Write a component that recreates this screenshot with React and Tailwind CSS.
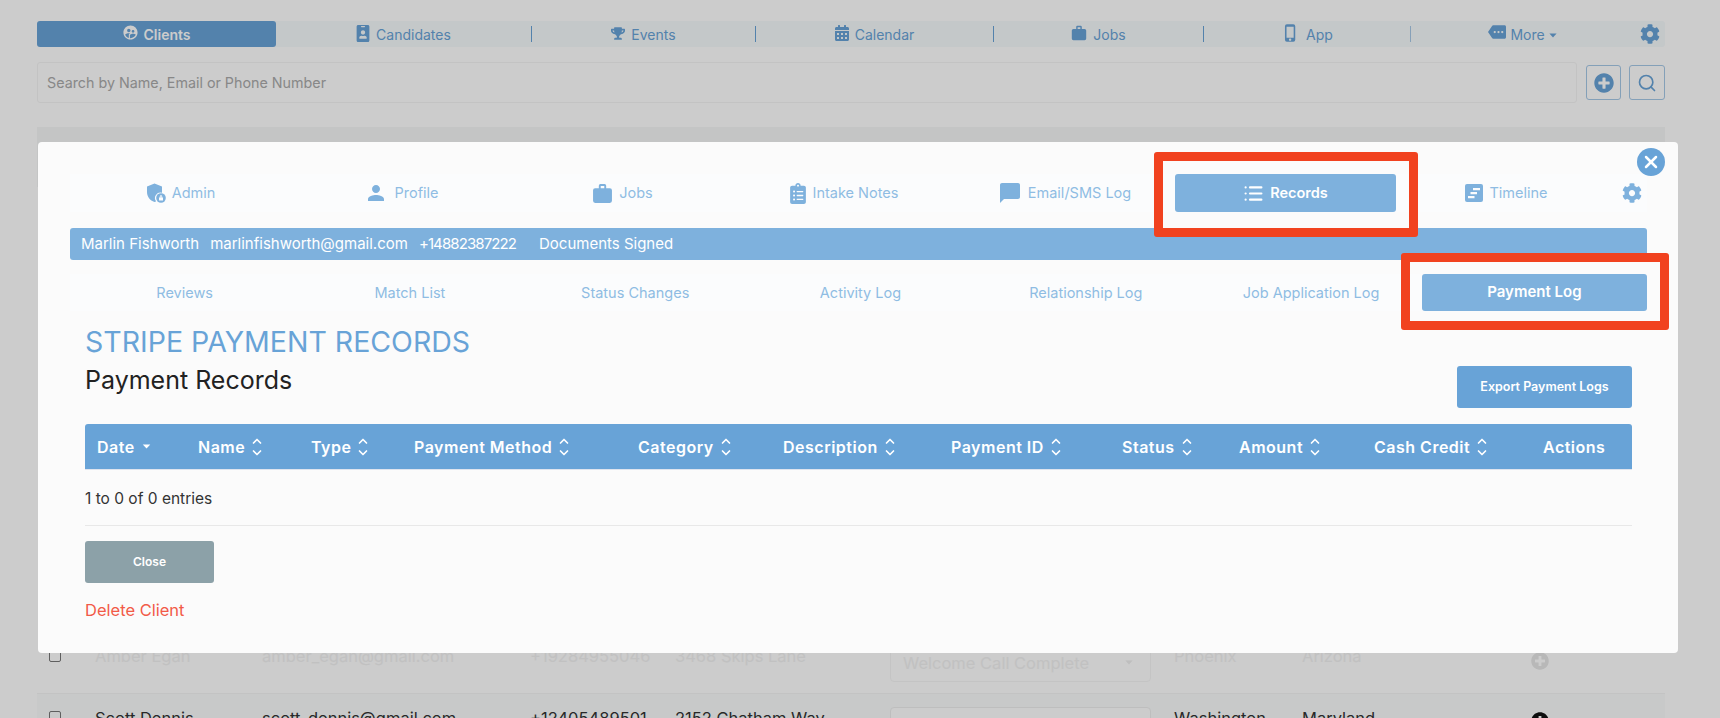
import React from 'react';
import { FaCalendarAlt, FaClipboardList, FaCog, FaIdBadge, FaPlusCircle, FaTrophy } from 'react-icons/fa';
import { MdChatBubble, MdMore, MdPerson, MdPhoneIphone, MdSupervisedUserCircle } from 'react-icons/md';
import { List, Search, X } from 'lucide-react';

const BagIcon = ({ className }) => (
    <svg viewBox="0 0 20 20" className={className} fill="currentColor">
        <path fillRule="evenodd" d="M6.500 5V2.500A1.500 1.500 0 0 1 8 1h4a1.500 1.500 0 0 1 1.500 1.500V5H17a2 2 0 0 1 2 2v10a2 2 0 0 1-2 2H3a2 2 0 0 1-2-2V7a2 2 0 0 1 2-2zM8.300 5h3.400V2.800H8.300z" />
    </svg>
);

const AdminIcon = ({ className }) => (
    <svg viewBox="0 0 20 20" className={className} fill="currentColor">
        <path d="M8.500 0.500L1 3.500v5.500c0 4.600 3 8.600 7.500 10c.6-.2 1.100-.4 1.600-.7a5.500 5.500 0 0 1 5.900-8.600V3.500z" />
        <circle cx="15" cy="15" r="4.800" />
        <path fill="#fbfcfd" d="M13 14.500h4v3h-4zM13.800 14.500v-1a1.200 1.200 0 0 1 2.400 0v1h-.8v-1a.4.4 0 0 0-.8 0v1z" />
    </svg>
);

const TimelineIcon = ({ className }) => (
    <svg viewBox="0 0 18 18" className={className}>
        <rect width="18" height="18" rx="2" fill="currentColor" />
        <path d="M8 4h7v2.200H8zM5.500 8h6.500v2.200H5.500zM3 12h6.500v2.200H3z" fill="#fbfcfd" />
    </svg>
);

const RecordsIcon = ({ className }) => <List className={className} strokeWidth={2.5} />;

const SortIcon = () => (
    <svg viewBox="0 0 10 18" className="w-[10px] h-[18px]" fill="none" stroke="currentColor" strokeWidth="1.700" strokeLinecap="round" strokeLinejoin="round">
        <path d="M1.500 5L5 1.500L8.500 5M1.500 13L5 16.500L8.500 13" />
    </svg>
);

const Caret = ({ className }) => (
    <svg viewBox="0 0 10 6" className={className} fill="currentColor">
        <path d="M0.500 0.500h9L5 5.500z" />
    </svg>
);

const mainNav = [
    { label: 'Candidates', Icon: FaIdBadge, iconClass: 'w-[14px] h-[17px]' },
    { label: 'Events', Icon: FaTrophy, iconClass: 'w-[14px] h-[15px]', line: true },
    { label: 'Calendar', Icon: FaCalendarAlt, iconClass: 'w-[14px] h-[16px]', line: true },
    { label: 'Jobs', Icon: BagIcon, iconClass: 'w-[16px] h-[16px]', line: true },
    { label: 'App', Icon: MdPhoneIphone, iconClass: 'w-[19px] h-[20px]', line: true },
];

const modalTabs = [
    { label: 'Admin', Icon: AdminIcon, iconClass: 'w-[20px] h-[20px]' },
    { label: 'Profile', Icon: MdPerson, iconClass: 'w-[24px] h-[24px]' },
    { label: 'Jobs', Icon: BagIcon, iconClass: 'w-[21px] h-[21px]' },
    { label: 'Intake Notes', Icon: FaClipboardList, iconClass: 'w-[18px] h-[21px]' },
    { label: 'Email/SMS Log', Icon: MdChatBubble, iconClass: 'w-[24px] h-[24px]' },
    { label: 'Records', Icon: RecordsIcon, iconClass: 'w-[21px] h-[21px]', active: true },
    { label: 'Timeline', Icon: TimelineIcon, iconClass: 'w-[18px] h-[18px]' },
];

const subTabs = ['Reviews', 'Match List', 'Status Changes', 'Activity Log', 'Relationship Log', 'Job Application Log', 'Payment Log'];

const columns = [
    { label: 'Date', caret: true },
    { label: 'Name', sort: true },
    { label: 'Type', sort: true },
    { label: 'Payment Method', sort: true },
    { label: 'Category', sort: true },
    { label: 'Description', sort: true },
    { label: 'Payment ID', sort: true },
    { label: 'Status', sort: true },
    { label: 'Amount', sort: true },
    { label: 'Cash Credit', sort: true },
    { label: 'Actions' },
];

const ClientRow = ({ name, email, phone, address, city, state, faded }) => {
    const textTop = faded ? 'mt-[18px]' : 'mt-[15px]';
    return (
        <div className={`grid grid-cols-[46px_167px_268px_145px_215px_261px_23px_128px_229px_1fr] pl-[12px] h-[64px] items-start text-[16.500px] leading-[18px] ${faded ? 'text-[#f2f2f2]' : 'bg-[#fafcfc] border-t border-[#f4f4f4] text-[#333333]'}`}>
            <div className={`w-[12px] h-[13px] border rounded-[2px] border-[#777777] ${faded ? 'mt-[20px]' : 'mt-[17px]'}`}></div>
            <span className={textTop}>{name}</span>
            <span className={textTop}>{email}</span>
            <span className={textTop}>{phone}</span>
            <span className={`${textTop} whitespace-nowrap`}>{address}</span>
            <div className={`h-[39px] flex items-center justify-between pl-[12px] pr-[17px] border rounded-[4px] ${faded ? 'mt-[14px] border-[#f6f6f6]' : 'mt-[13px] border-[#eeeeee] bg-white'}`}>
                <span className={faded ? 'text-[#f2f2f2]' : 'text-[#dddddd]'}>Welcome Call Complete</span>
                <Caret className="w-[8px] h-[5px] text-[#eeeeee]" />
            </div>
            <span></span>
            <span className={textTop}>{city}</span>
            <span className={textTop}>{state}</span>
            <FaPlusCircle className={`w-[18px] h-[18px] ${faded ? 'mt-[23px] text-[#e6e6e6]' : 'mt-[18px] text-[#111111]'}`} />
        </div>
    );
};

export default function App() {
    return (
        <div className="relative w-[1720px] h-[718px] overflow-hidden bg-white font-['Inter','Liberation_Sans',sans-serif]">
            {/* Page behind the dialog */}
            <div className="pl-[37px] pr-[55px] pt-[21px]">
                <nav className="grid grid-cols-[239px_255px_224px_238px_210px_207px_224px_1fr] h-[26px] items-center rounded-[3px] bg-[#f6fafc] text-[14px] text-[#68a3d7]">
                    <div className="h-full flex items-center justify-center gap-1 rounded-[3px] bg-[#68a3d7] text-white font-semibold">
                        <MdSupervisedUserCircle className="w-[17px] h-[17px] -mt-[3px]" />
                        Clients
                    </div>
                    {mainNav.map(({ label, Icon, iconClass, line }) => (
                        <div key={label} className={`h-[16px] flex items-center justify-center gap-1.5 ${line ? 'border-l border-[#68a3d7]' : ''}`}>
                            <Icon className={`${iconClass} -mt-[2px]`} />
                            {label}
                        </div>
                    ))}
                    <div className="h-[16px] flex items-center justify-center gap-1 border-l border-[#a8c9e6]">
                        <MdMore className="w-[18px] h-[18px] -mt-[4px]" />
                        More
                        <Caret className="w-[8px] h-[5px] mt-[2px]" />
                    </div>
                    <div className="flex justify-center">
                        <FaCog className="w-[20px] h-[20px]" />
                    </div>
                </nav>

                <div className="flex items-center gap-[9px] mt-[15px]">
                    <div className="flex-1 h-[41px] flex items-center pl-[9px] border border-[#f4f4f4] rounded-[3px] text-[14.300px] text-[#aaaaaa]">
                        Search by Name, Email or Phone Number
                    </div>
                    <button className="w-[35px] h-[35px] flex items-center justify-center border border-[#a5c8e7] rounded-[3px] text-[#68a3d7]">
                        <FaPlusCircle className="w-[20px] h-[20px]" />
                    </button>
                    <button className="w-[36px] h-[35px] -ml-px flex items-center justify-center border border-[#a5c8e7] rounded-[3px] text-[#68a3d7]">
                        <Search className="w-[20px] h-[20px]" strokeWidth={2} />
                    </button>
                </div>

                <div className="mt-[24px] h-[502px] bg-[linear-gradient(#f5f7f7_60px,#ffffff_60px)]"></div>

                <ClientRow faded name="Amber Egan" email="amber_egan@gmail.com" phone="+19284955046" address="3468 Skips Lane" city="Phoenix" state="Arizona" />
                <ClientRow name="Scott Dennis" email="scott_dennis@gmail.com" phone="+12405489501" address="2152 Chatham Way" city="Washington" state="Maryland" />
            </div>

            <div className="absolute inset-0 bg-black/20"></div>

            {/* Client dialog */}
            <div className="absolute left-[38px] top-[142px] w-[1640px] h-[511px] rounded-[4px] bg-[#fbfbfb] pt-[32px] pl-[32px] pr-[31px]">
                <button className="absolute right-[13px] top-[6px] w-[28px] h-[28px] flex items-center justify-center rounded-full bg-[#68a3d7] text-white">
                    <X className="w-[20px] h-[20px]" strokeWidth={3} />
                </button>

                <div className="grid grid-cols-[repeat(7,221px)_1fr] h-[38px] items-center bg-[#fbfcfd] text-[14.500px] text-[#8fbce3]">
                    {modalTabs.map(({ label, Icon, iconClass, active }) => (
                        <div key={label} className={`h-full flex items-center justify-center gap-1.5 rounded-[3px] ${active ? 'bg-[#7eb1dd] text-white font-semibold' : ''}`}>
                            <Icon className={`${iconClass} ${active ? '' : 'text-[#7eb1dd]'}`} />
                            {label}
                        </div>
                    ))}
                    <div className="flex justify-center">
                        <FaCog className="w-[20px] h-[20px] text-[#7eb1dd]" />
                    </div>
                </div>

                <div className="mt-[16px] h-[32px] flex items-center pl-[11px] rounded-[3px] bg-[#7eb1dd] text-[15px] text-white">
                    <span>Marlin Fishworth</span>
                    <span className="ml-[11px]">marlinfishworth@gmail.com</span>
                    <span className="ml-[11px] tracking-[-0.9px]">+14882387222</span>
                    <span className="ml-[23px]">Documents Signed</span>
                </div>

                <div className="mt-[14px] grid grid-cols-7 h-[37px] items-center bg-[#fbfcfd] text-[14.500px] text-[#8fbce3]">
                    {subTabs.map((label) => (
                        <div key={label} className={`h-full flex items-center justify-center rounded-[3px] ${label === 'Payment Log' ? 'bg-[#7eb1dd] text-[15px] text-white font-semibold' : 'pl-[4px]'}`}>
                            {label}
                        </div>
                    ))}
                </div>

                <div className="px-[15px]">
                    <h1 className="mt-[13px] text-[28.500px] leading-[36px] text-[#68a3d7]">STRIPE PAYMENT RECORDS</h1>
                    <div className="mt-[4px] flex items-start justify-between">
                        <h2 className="text-[25px] leading-[32px] text-[#222222]">Payment Records</h2>
                        <button className="mt-[2px] w-[175px] h-[42px] rounded-[3px] bg-[#68a3d7] text-[12.500px] font-semibold text-white">
                            Export Payment Logs
                        </button>
                    </div>

                    <div className="mt-[16px] h-[46px] grid grid-cols-[101px_113px_103px_224px_145px_168px_171px_117px_135px_169px_1fr] items-center pl-[12px] rounded-t-[3px] bg-[#68a3d7] border-b border-[#dfe4ee] text-[16px] tracking-[0.5px] font-semibold text-white">
                        {columns.map(({ label, sort, caret }) => (
                            <div key={label} className="flex items-center gap-[7px] whitespace-nowrap">
                                {label}
                                {sort && <SortIcon />}
                                {caret && <Caret className="w-[9px] h-[5px]" />}
                            </div>
                        ))}
                    </div>

                    <p className="mt-[17px] text-[15.500px] leading-[24px] text-[#333333]">1 to 0 of 0 entries</p>
                    <hr className="mt-[14px] border-[#e8e8e8]" />
                    <button className="block mt-[15px] w-[129px] h-[42px] rounded-[3px] bg-[#8ca1a8] text-[12px] font-semibold text-white">Close</button>
                    <p className="mt-[15px] text-[16.500px] leading-[24px] text-[#f25a48]">Delete Client</p>
                </div>

                {/* Red highlight boxes from the annotated screenshot */}
                <div className="absolute left-[1116px] top-[10px] w-[264px] h-[85px] border-[9px] border-[#f1421f] rounded-[3px]"></div>
                <div className="absolute left-[1363px] top-[111px] w-[268px] h-[77px] border-[9px] border-[#f1421f] rounded-[3px]"></div>
            </div>
        </div>
    );
}
